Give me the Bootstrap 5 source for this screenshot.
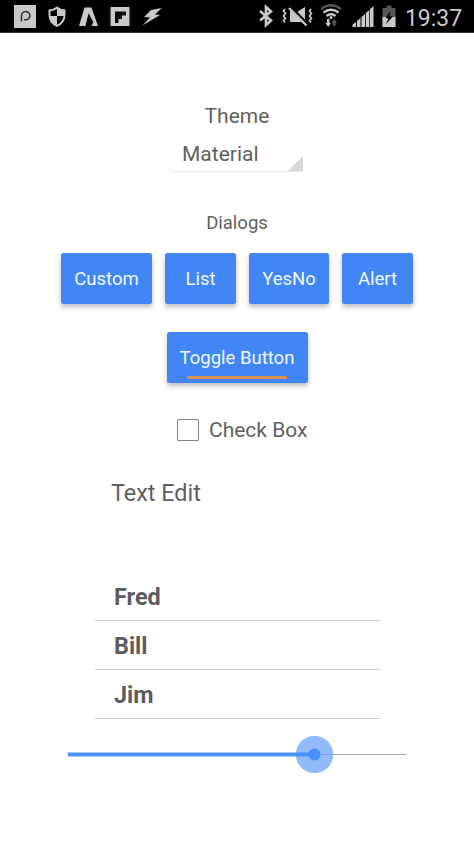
<!DOCTYPE html>
<html lang="en">
<head>
<meta charset="utf-8">
<meta name="viewport" content="width=device-width, initial-scale=1">
<title>Theme settings</title>
<link href="https://cdn.jsdelivr.net/npm/bootstrap@5.3.0/dist/css/bootstrap.min.css" rel="stylesheet">
<style>
body{font-family:Roboto,"Liberation Sans",sans-serif;color:#5f5f5f;background:#fff;font-size:21px;line-height:30px;height:843px;overflow:hidden}
.statusbar{height:33px;background:#000;border-bottom:1px solid #333}
.statusbar svg{display:block;width:474px;height:32px}
.clock{font-size:24px;fill:#c9c9c9;font-family:Roboto,sans-serif}
.theme-label{margin-top:68px}
.spinner-box{width:131px;height:36px;margin:5px 0 0 172px;padding-left:10px;border-bottom:1px solid #e8e8e8;line-height:34px}
.corner{width:15px;height:15px;background:#d8d8d8;clip-path:polygon(100% 0,100% 100%,0 100%)}
.dialogs-label{font-size:18.5px;margin-top:36px}
.dialog-row{gap:13px;margin-top:15px}
.mat-btn{--bs-btn-color:#f0faff;--bs-btn-bg:#4285f5;--bs-btn-border-color:#4285f5;--bs-btn-hover-bg:#3877e4;--bs-btn-hover-color:#fff;--bs-btn-border-radius:2.5px;--bs-btn-font-size:18.5px;--bs-btn-padding-x:0;--bs-btn-padding-y:0;--bs-btn-border-width:0;height:51px;box-shadow:0 3px 5px rgba(40,50,70,.32)}
.dialog-row .mat-btn{padding-top:2px}
.w-custom{width:91px}.w-list{width:71px}.w-yes{width:80px}.w-alert{width:71px}
.toggle{width:141px;margin-top:28px;line-height:23px}
.toggle-bar{width:100px;height:3px;border-radius:1px;background:#d9914f;margin-top:6px}
.check-row{margin:32px 0 0 177px;gap:10px}
.check-row .form-check-input{width:22px;height:22px;border:1px solid #858585;border-radius:1px;margin:0}
.edit-field{font-size:23.4px;line-height:34px;height:34px;margin:31px 0 0 111px;width:250px;padding:0;color:#5f5f5f;border:0;background:none}
.names{width:285px;margin:62px 0 0 95px;font-size:23.4px;font-weight:700;--bs-list-group-color:#5c5c5c;--bs-list-group-bg:transparent}
.names .list-group-item,.names .list-group-item:last-child{height:49px;line-height:48px;padding:1px 0 0 19px;border-width:0 0 1px;border-color:#c9c9c9}
.slider{width:338px;height:38px;margin:17px 0 0 68px}
.slider svg{display:block}
</style>
<script src="https://cdn.jsdelivr.net/npm/bootstrap@5.3.0/dist/js/bootstrap.bundle.min.js"></script>
</head>
<body>
<header class="statusbar">
<svg viewBox="0 0 474 32" fill="#c9c9c9">
  <path d="M14 5h22v23H14z"/>
  <path d="M21.500 21.500V16a4.200 4.200 0 1 1 4.200 3.800H24" fill="none" stroke="#333" stroke-width="1.500"/>
  <path d="M57 6.500q4 3 8.500 3v5q0 9-8.500 12.500-8.500-3.500-8.500-12.500v-5q4.500 0 8.500-3z"/>
  <path d="M57 9v7h-6.500v-4.700q3.500-.3 6.500-2.300zM57 16h6.500q-.6 6-6.500 8.700z" fill="#050505"/>
  <path d="M84.500 7.500h7L98 26h-6.500l1.500-3.500-5-7-2.500 10.500H79z"/>
  <path d="M88.500 13l5 9.500-6.500 1.500z" fill="#000"/>
  <path d="M110.500 7h19v19h-19z"/>
  <path d="M115 11.500h11v4h-4v3.500h-3.500V23H115z" fill="#0a0a0a"/>
  <path d="M151 10l10.500-2-6.500 6.500 5 .5-17.500 10.500 7.500-8-6-.5z"/>
  <path d="M260 11l11 9.500-5 4.500V7l5 4.500-11 9" fill="none" stroke="#c9c9c9" stroke-width="2.600"/>
  <path d="M290 10l12 12h-12zM297 12l8-5v13z"/>
  <path d="M291.500 7.500l16 16" stroke="#000" stroke-width="2"/>
  <path d="M289 8L306.500 25.500" stroke="#c9c9c9" stroke-width="2.300"/>
  <path d="M285 9l-1.500 2 2 2.500-2 2.500 2 2.500-2 2 1.500 2M311 9l-1.500 2 2 2.500-2 2.500 2 2.500-2 2 1.500 2" fill="none" stroke="#c9c9c9" stroke-width="1.700"/>
  <path d="M321 9q10-7.500 20 0" fill="none" stroke="#555" stroke-width="2.300"/>
  <path d="M323.500 12.500q7.500-5.500 15 0M326.500 16q4.500-3.500 9 0" fill="none" stroke="#c9c9c9" stroke-width="2.500"/>
  <circle cx="331" cy="17.500" r="1.500"/>
  <path d="M327 19h2.500v4h1.500l-2.800 4-2.800-4H327z"/>
  <path d="M333 26v-3h-1.500l2.800-4 2.800 4h-1.600v3z" fill="#555"/>
  <path d="M352.500 27v-2.500l3.500-2.500v5zM357 27v-6l3.500-3v9zM361.500 27V17l3.500-3v13zM365.800 27V13l3.500-3v17zM370 27V9l3.500-3v21z"/>
  <path d="M382.500 8h4V5.500h5V8h4v19h-13z" fill="#555"/>
  <path d="M382.500 17h13v10h-13z"/>
  <path d="M390.500 11l-5 7 3 .5-3 6 7.500-8-3.500-.5z" fill="#080808"/>
  <text class="clock" x="405" y="25.500" textLength="57" lengthAdjust="spacingAndGlyphs">19:37</text>
</svg>
</header>
<main>
  <div class="theme-label text-center">Theme</div>
  <div class="spinner-box d-flex justify-content-between align-items-end"><span>Material</span><i class="corner"></i></div>
  <div class="dialogs-label text-center">Dialogs</div>
  <div class="dialog-row d-flex justify-content-center">
    <button class="btn mat-btn w-custom">Custom</button>
    <button class="btn mat-btn w-list">List</button>
    <button class="btn mat-btn w-yes">YesNo</button>
    <button class="btn mat-btn w-alert">Alert</button>
  </div>
  <div class="d-flex justify-content-center">
    <button class="btn mat-btn toggle d-flex flex-column align-items-center justify-content-end pb-1"><span>Toggle Button</span><span class="toggle-bar"></span></button>
  </div>
  <div class="check-row d-flex align-items-center"><input class="form-check-input" type="checkbox" id="cb"><label for="cb">Check Box</label></div>
  <input class="edit-field d-block" type="text" value="Text Edit" aria-label="Text Edit">
  <ul class="names list-group list-group-flush">
    <li class="list-group-item">Fred</li>
    <li class="list-group-item">Bill</li>
    <li class="list-group-item">Jim</li>
  </ul>
  <div class="slider">
    <svg width="338" height="38" viewBox="0 0 338 38">
      <path d="M246 18.500h92" stroke="#a5a5a5"/>
      <circle cx="246.500" cy="18.500" r="18.700" fill="#92bbfc"/>
      <path d="M246 18.500h19" stroke="#7da5e6"/>
      <path d="M0 16.500h246v4H0z" fill="#4b91fa"/>
      <circle cx="246.500" cy="18.500" r="6" fill="#4b91fa"/>
    </svg>
  </div>
</main>
</body>
</html>
